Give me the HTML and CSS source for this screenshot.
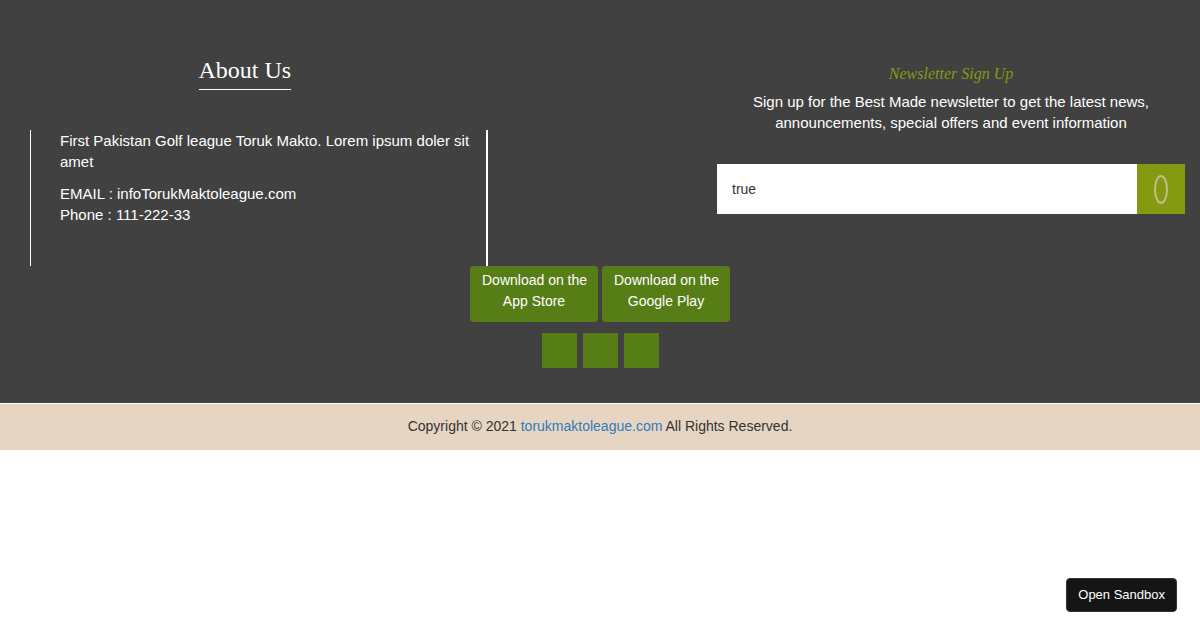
FILE: index.html
```html
<!DOCTYPE html>
<html lang="en">
<head>
  <meta charset="UTF-8">
  <meta name="viewport" content="width=device-width, initial-scale=1.0">
  <title>Toruk Makto League</title>
  <link rel="stylesheet" href="styles.css">
</head>
<body>
  <footer class="footer">
    <div class="footer-top">
      <section class="about">
        <h2 class="about-title"><span>About Us</span></h2>
        <div class="about-text">
          <p>First Pakistan Golf league Toruk Makto. Lorem ipsum doler sit amet</p>
          <p>EMAIL : infoTorukMaktoleague.com<br>Phone : 111-222-33</p>
        </div>
      </section>

      <section class="newsletter">
        <h3 class="newsletter-title">Newsletter Sign Up</h3>
        <p class="newsletter-text">Sign up for the Best Made newsletter to get the latest news, announcements, special offers and event information</p>
        <form class="newsletter-form">
          <input type="text" class="newsletter-input" value="true" aria-label="Email address">
          <button type="button" class="newsletter-btn" aria-label="Sign up">
            <svg width="14" height="30" viewBox="0 0 14 30"><ellipse cx="7" cy="15.5" rx="6" ry="13.5"/></svg>
          </button>
        </form>
      </section>
    </div>

    <div class="apps">
      <button type="button" class="app-btn">Download on the<br>App Store</button>
      <button type="button" class="app-btn">Download on the<br>Google Play</button>
    </div>

    <div class="social">
      <a href="#" class="social-link" aria-label="Facebook"></a>
      <a href="#" class="social-link" aria-label="Twitter"></a>
      <a href="#" class="social-link" aria-label="Instagram"></a>
    </div>

    <div class="copyright">
      <p>Copyright © 2021 <a href="#">torukmaktoleague.com</a> All Rights Reserved.</p>
    </div>
  </footer>

  <button type="button" class="sandbox-btn">Open Sandbox</button>
</body>
</html>
```

FILE: styles.css
```css
* {
  box-sizing: border-box;
}

body {
  margin: 0;
  font-family: "Liberation Sans", Arial, sans-serif;
  font-size: 15px;
  line-height: 21px;
  color: #333;
  background-color: #fff;
}

.footer {
  background-color: #414141;
  color: #fff;
}

.footer-top {
  display: flex;
  justify-content: space-between;
  padding: 56px 15px 0;
}

/* About */
.about {
  width: 41%;
  padding: 0 7px 0 15px;
}

.about-title {
  margin: 0 0 40px;
  padding-right: 28px;
  text-align: center;
  font-family: "Liberation Serif", "Times New Roman", serif;
  font-size: 24px;
  font-weight: 400;
  line-height: 28px;
}

.about-title span {
  display: inline-block;
  padding-bottom: 5px;
  border-bottom: 1px solid #fff;
}

.about-text {
  min-height: 136px;
  padding: 0 10px 0 29px;
  border-left: 1px solid #fff;
  border-right: 2px solid #fff;
}

.about-text p {
  margin: 0 0 11px;
}

/* Newsletter */
.newsletter {
  width: 40%;
  padding-top: 8px;
  text-align: center;
}

.newsletter-title {
  margin: 0 0 7px;
  font-family: "Liberation Serif", "Times New Roman", serif;
  font-size: 16px;
  font-style: italic;
  font-weight: 400;
  line-height: 20px;
  color: #839a11;
}

.newsletter-text {
  margin: 0 0 31px;
  padding: 0 20px;
}

.newsletter-form {
  display: flex;
}

.newsletter-input {
  flex: 1;
  min-width: 0;
  height: 50px;
  padding: 0 15px;
  border: 0;
  font-family: inherit;
  font-size: 14px;
  color: #333;
  background-color: #fff;
}

.newsletter-btn {
  display: flex;
  align-items: center;
  justify-content: center;
  width: 48px;
  height: 50px;
  padding: 0;
  border: 0;
  background-color: #839a11;
}

.newsletter-btn ellipse {
  fill: none;
  stroke: #c4bd8b;
  stroke-width: 2;
}

/* App links */
.apps {
  display: flex;
  justify-content: center;
  gap: 4px;
}

.app-btn {
  width: 128px;
  height: 56px;
  padding: 4px 12px 10px;
  border: 0;
  border-radius: 4px;
  font-family: inherit;
  font-size: 14px;
  line-height: 21px;
  white-space: nowrap;
  color: #fff;
  background-color: #577d17;
}

.social {
  display: flex;
  justify-content: center;
  gap: 6px;
  padding: 11px 0 35px;
}

.social-link {
  width: 35px;
  height: 35px;
  background-color: #577d17;
}

.copyright {
  padding: 12px 15px 13px;
  border-top: 1px solid #fff;
  text-align: center;
  font-size: 14px;
  color: #333;
  background-color: #e7d5c3;
}

.copyright p {
  margin: 0;
}

.copyright a {
  color: #337ab7;
  text-decoration: none;
}

.sandbox-btn {
  position: fixed;
  right: 23px;
  bottom: 18px;
  height: 34px;
  padding: 0 11px 2px;
  border: 1px solid #343434;
  border-radius: 4px;
  font-family: inherit;
  font-size: 13px;
  color: #fff;
  background-color: #151515;
}
```
